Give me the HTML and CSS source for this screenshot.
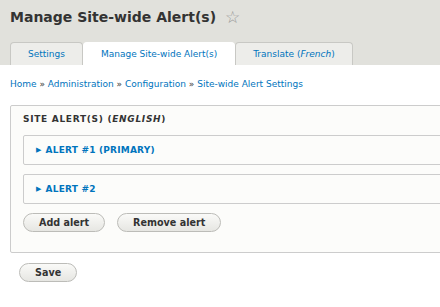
FILE: index.html
```html
<!DOCTYPE html>
<html>
<head>
<meta charset="utf-8">
<link rel="stylesheet" href="styles.css">
</head>
<body>
<div class="header">
  <h1 class="title">Manage Site-wide Alert(s) <span class="star">☆</span></h1>
  <ul class="tabs">
    <li class="tab"><a href="#">Settings</a></li>
    <li class="tab active"><a href="#">Manage Site-wide Alert(s)</a></li>
    <li class="tab"><a href="#">Translate (<em>French</em>)</a></li>
  </ul>
</div>
<div class="page">
  <div class="breadcrumb"><a href="#">Home</a> » <a href="#">Administration</a> » <a href="#">Configuration</a> » <a href="#">Site-wide Alert Settings</a></div>
  <div class="fieldset">
    <div class="legend">Site alert(s) (<em>English</em>)</div>
    <div class="details"><span class="tri">▶</span>Alert #1 (Primary)</div>
    <div class="details"><span class="tri">▶</span>Alert #2</div>
    <div class="actions">
      <button class="btn">Add alert</button>
      <button class="btn">Remove alert</button>
    </div>
  </div>
  <div class="save-row"><button class="btn">Save</button></div>
</div>
</body>
</html>
```
FILE: styles.css
```css
html, body { margin: 0; padding: 0; overflow: hidden; }
body {
  font-family: "DejaVu Sans", sans-serif;
  font-size: 12px;
  color: #333;
  background: #fff;
  width: 440px;
  height: 307px;
}
a { color: #0074bd; text-decoration: none; }
.header {
  background: #e1e1dc;
  padding: 0 0 0 10px;
}
.title {
  margin: 0;
  padding-top: 7px;
  font-size: 14px;
  font-weight: bold;
  color: #333;
  line-height: 20px;
  height: 20px;
}
.star { color: #999; font-weight: normal; font-size: 17px; margin-left: 4px; vertical-align: -1px; }
.tabs {
  list-style: none;
  margin: 15px 0 0 0;
  padding: 0;
  display: flex;
}
.tab {
  background: #ededea;
  border: 1px solid #c8c8c4;
  border-bottom: none;
  border-radius: 4px 4px 0 0;
  height: 22px;
  font-size: 9px;
  line-height: 22px;
}
.tab a { display: block; padding: 0 17px; }
.tab.active { background: #fff; border-color: #fff; }
.page { padding: 0 0 0 10px; }
.breadcrumb { font-size: 9px; padding-top: 12px; line-height: 14px; }
.fieldset {
  margin-top: 14px;
  width: 520px;
  background: #fcfcfa;
  border: 1px solid #ccc;
  border-radius: 2px;
  padding: 6px 12px 20px 12px;
  box-sizing: border-box;
}
.legend {
  font-size: 9px;
  font-weight: bold;
  text-transform: uppercase;
  letter-spacing: 0.7px;
  line-height: 14px;
  margin-bottom: 9px;
}
.details {
  background: #fcfcfa;
  border: 1px solid #ccc;
  border-radius: 2px;
  height: 28px;
  line-height: 28px;
  padding-left: 12px;
  font-size: 9px;
  font-weight: bold;
  text-transform: uppercase;
  color: #0074bd;
  letter-spacing: 0.2px;
  margin-bottom: 9px;
}
.tri { font-size: 7px; margin-right: 4px; vertical-align: 1px; }
.actions { display: flex; gap: 12px; margin-top: 1px; }
.btn {
  font-family: "DejaVu Sans", sans-serif;
  font-weight: bold;
  font-size: 9.6px;
  color: #333;
  background: linear-gradient(#fafaf8, #e6e6e2);
  border: 1px solid #bcbcb8;
  border-radius: 10px;
  height: 19px;
  padding: 0 15px;
}
.save-row { padding: 10px 0 0 9px; }
```
